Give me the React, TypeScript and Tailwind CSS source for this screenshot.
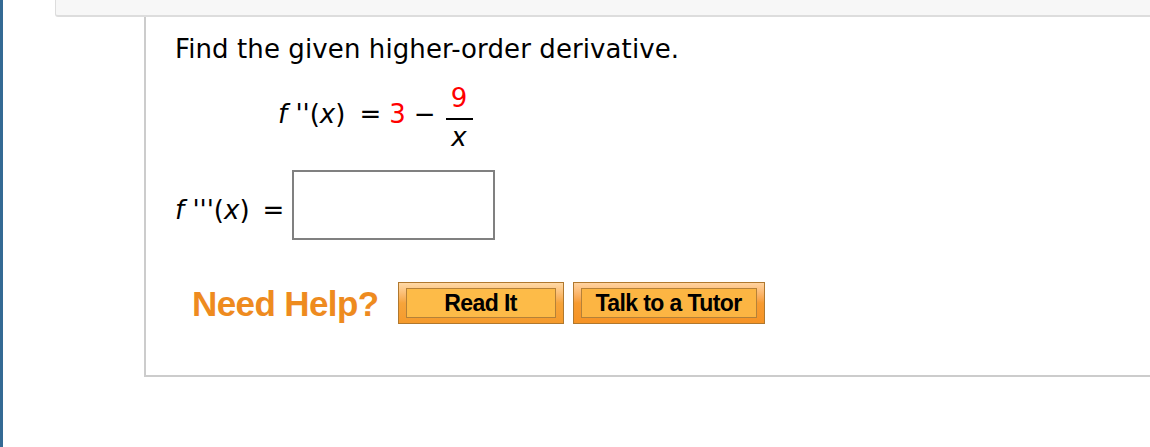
import React from 'react'

const HelpButton: React.FC<{ label: string; width: string; frame: string; fill: string }> = ({
  label,
  width,
  frame,
  fill,
}) => {
  return (
    <div className={`flex h-[42px] ${width} border border-[#b0782e] px-[7px] py-[5px] ${frame}`}>
      <div
        className={`flex h-full w-full items-center justify-center border border-[#b58138] ${fill} font-['Liberation_Sans',Arial,sans-serif] text-[23px] font-bold tracking-[-0.6px] text-black`}
      >
        {label}
      </div>
    </div>
  )
}

const App: React.FC = () => {
  return (
    <div className="flex h-[447px] w-[1150px] overflow-hidden bg-white font-['DejaVu_Sans',Verdana,sans-serif] text-black">
      <div className="w-[3px] shrink-0 bg-[#346a94]" />

      <div className="flex min-w-0 flex-1 flex-col">
        <div className="ml-[52px] h-[17px] shrink-0 rounded-bl-[3px] border-b-2 border-l border-[#dddddd] bg-[#f7f7f7]" />

        <div className="ml-[141px] h-[360px] shrink-0 border-b-2 border-l-2 border-[#cccccc] pl-[29px] pt-[17px] text-[26px] leading-[30px]">
          <p className="tracking-[0.1px]">Find the given higher-order derivative.</p>

          {/* given second derivative */}
          <div className="ml-[103px] mt-[21px] flex items-start">
            <div className="mt-[14px] flex whitespace-pre">
              <span className="italic">f</span>
              <span> ''(</span>
              <span className="italic">x</span>
              <span>)</span>
              <span className="ml-[14px]">=</span>
              <span className="ml-[8px] text-[#ff0000]">3</span>
              <span className="ml-[8px]">−</span>
            </div>
            <div className="ml-[10px] flex w-[27px] flex-col items-center">
              <span className="leading-[26px] text-[#ff0000]">9</span>
              <div className="mt-[7px] h-[2px] w-full bg-black" />
              <span className="mt-[4px] italic leading-[26px]">x</span>
            </div>
          </div>

          {/* answer row */}
          <div className="mt-[20px] flex items-start">
            <div className="mt-[25px] flex whitespace-pre">
              <span className="italic">f</span>
              <span> '''(</span>
              <span className="italic">x</span>
              <span>)</span>
              <span className="ml-[13px]">=</span>
            </div>
            <div className="ml-[8px] h-[70px] w-[203px] border-2 border-[#808080] bg-white" />
          </div>

          {/* help row */}
          <div className="ml-[17px] mt-[42px] flex items-center">
            <span className="font-['Liberation_Sans',Arial,sans-serif] text-[35px] font-bold leading-none tracking-[-0.6px] text-[#ee8b1f]">
              Need Help?
            </span>
            <div className="ml-[19px]">
              <HelpButton
                label="Read It"
                width="w-[166px]"
                frame="bg-gradient-to-b from-[#ffd9a6] via-[#f6a43a] to-[#f59a2c]"
                fill="bg-[#fdbb48]"
              />
            </div>
            <div className="ml-[9px]">
              <HelpButton
                label="Talk to a Tutor"
                width="w-[192px]"
                frame="bg-gradient-to-b from-[#ffd3a0] via-[#f79b30] to-[#f69325]"
                fill="bg-[#fcb543]"
              />
            </div>
          </div>
        </div>
      </div>
    </div>
  )
}

export default App
